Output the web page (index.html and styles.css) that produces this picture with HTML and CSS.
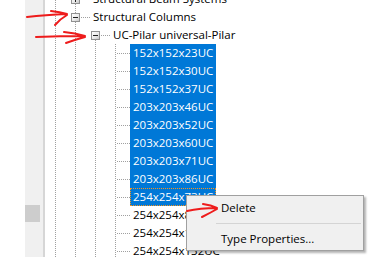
FILE: index.html
```html
<!DOCTYPE html>
<html lang="en">
<head>
  <meta charset="UTF-8" />
  <title>Project Browser</title>
  <link rel="stylesheet" href="styles.css">
</head>
<body>
  <div class="window">
    <div class="side"></div>
    <div class="scroll"><div class="thumb"></div></div>
    <div class="split"></div>

    <ul class="tree">
      <li class="row">
        <span class="guide"></span>
        <span class="node up down"><i class="box plus"></i></span>
        <span class="label">Structural Beam Systems</span>
      </li>
      <li class="row">
        <span class="guide"></span>
        <span class="node up down"><i class="box"></i></span>
        <span class="label">Structural Columns</span>
      </li>
      <li class="row">
        <span class="guide"></span>
        <span class="guide"></span>
        <span class="node down"><i class="box"></i></span>
        <span class="label">UC-Pilar universal-Pilar</span>
      </li>
      <li class="row"><span class="guide"></span><span class="guide"></span><span class="guide"></span><span class="leaf"></span><span class="label sel">152x152x23UC</span></li>
      <li class="row"><span class="guide"></span><span class="guide"></span><span class="guide"></span><span class="leaf"></span><span class="label sel">152x152x30UC</span></li>
      <li class="row"><span class="guide"></span><span class="guide"></span><span class="guide"></span><span class="leaf"></span><span class="label sel">152x152x37UC</span></li>
      <li class="row"><span class="guide"></span><span class="guide"></span><span class="guide"></span><span class="leaf"></span><span class="label sel">203x203x46UC</span></li>
      <li class="row"><span class="guide"></span><span class="guide"></span><span class="guide"></span><span class="leaf"></span><span class="label sel">203x203x52UC</span></li>
      <li class="row"><span class="guide"></span><span class="guide"></span><span class="guide"></span><span class="leaf"></span><span class="label sel">203x203x60UC</span></li>
      <li class="row"><span class="guide"></span><span class="guide"></span><span class="guide"></span><span class="leaf"></span><span class="label sel">203x203x71UC</span></li>
      <li class="row"><span class="guide"></span><span class="guide"></span><span class="guide"></span><span class="leaf"></span><span class="label sel">203x203x86UC</span></li>
      <li class="row"><span class="guide"></span><span class="guide"></span><span class="guide"></span><span class="leaf"></span><span class="label sel focus">254x254x73UC</span></li>
      <li class="row"><span class="guide"></span><span class="guide"></span><span class="guide"></span><span class="leaf"></span><span class="label">254x254x89UC</span></li>
      <li class="row"><span class="guide"></span><span class="guide"></span><span class="guide"></span><span class="leaf"></span><span class="label">254x254x107UC</span></li>
      <li class="row"><span class="guide"></span><span class="guide"></span><span class="guide"></span><span class="leaf"></span><span class="label">254x254x132UC</span></li>
    </ul>

    <div class="menu">
      <div class="item">Delete</div>
      <div class="sep"></div>
      <div class="item">Type Properties...</div>
    </div>

    <svg class="marks" width="370" height="257" viewBox="0 0 370 257">
      <path d="M27 17 Q45 15 67 14 M51 11 Q60 12 67 14 M67 15 Q60 19 55 25" />
      <path d="M36 37 Q60 36 85 36 M64 32 Q75 33 85 36 M85 37 Q74 40 66 43" />
      <path d="M187 211 Q200 208 217 208 M203 204 Q211 205 217 208 M217 209 Q210 213 202 217" />
    </svg>
  </div>
</body>
</html>
```

FILE: styles.css
```css
body {
  margin: 0;
  font-family: "Open Sans", "Noto Sans", sans-serif;
  font-size: 11.5px;
  color: #000;
  background: #fff;
}
.window {
  position: relative;
  display: flex;
  width: 370px;
  height: 257px;
  overflow: hidden;
}
.side {
  width: 25px;
  background: #fff;
}
.scroll {
  width: 18px;
  padding-top: 205px;
  background: #f0f0f0;
  box-sizing: border-box;
}
.thumb {
  width: 15px;
  height: 17px;
  background: #cdcdcd;
}
.split {
  width: 2px;
  background: #d6d6d6;
}
.tree {
  list-style: none;
  margin: -10px 0 0 0;
  padding: 0;
  flex: 1;
}
.row {
  display: flex;
  height: 18px;
  line-height: 18px;
  white-space: nowrap;
}
.guide {
  flex: none;
  width: 20px;
  height: 18px;
  background: repeating-linear-gradient(to bottom, #a0a0a0 0 1px, transparent 1px 2px) no-repeat 10px 0 / 1px 18px;
}
.leaf {
  flex: none;
  width: 25px;
  height: 18px;
  background:
    repeating-linear-gradient(to bottom, #a0a0a0 0 1px, transparent 1px 2px) no-repeat 10px 0 / 1px 18px,
    repeating-linear-gradient(to right, #a0a0a0 0 1px, transparent 1px 2px) no-repeat 12px 9px / 13px 1px;
}
.node {
  flex: none;
  width: 25px;
  height: 18px;
  padding: 5px 0 0 6px;
  box-sizing: border-box;
  background: repeating-linear-gradient(to right, #a0a0a0 0 1px, transparent 1px 2px) no-repeat 16px 9px / 9px 1px;
}
.node.up.down {
  background:
    repeating-linear-gradient(to bottom, #a0a0a0 0 1px, transparent 1px 2px) no-repeat 10px 0 / 1px 18px,
    repeating-linear-gradient(to right, #a0a0a0 0 1px, transparent 1px 2px) no-repeat 16px 9px / 9px 1px;
}
.node.down:not(.up) {
  background:
    repeating-linear-gradient(to bottom, #a0a0a0 0 1px, transparent 1px 2px) no-repeat 10px 14px / 1px 4px,
    repeating-linear-gradient(to right, #a0a0a0 0 1px, transparent 1px 2px) no-repeat 16px 9px / 9px 1px;
}
.box {
  position: relative;
  display: block;
  width: 9px;
  height: 9px;
  box-sizing: border-box;
  border: 1px solid #919191;
  background: linear-gradient(135deg, #ffffff 0%, #e8e8e8 60%, #c8c8c8 100%);
}
.box::before {
  content: "";
  position: absolute;
  left: 1px;
  top: 3px;
  width: 5px;
  height: 1px;
  background: #1e1e1e;
}
.box.plus::after {
  content: "";
  position: absolute;
  left: 3px;
  top: 1px;
  width: 1px;
  height: 5px;
  background: #1e1e1e;
}
.label {
  padding: 0 3px;
  height: 18px;
  box-sizing: border-box;
}
.label.sel {
  background: #0078d7;
  color: #fff;
}
.label.focus {
  border: 1px dotted #f7941d;
  line-height: 16px;
  padding: 0 2px;
}
.menu {
  position: absolute;
  left: 186px;
  top: 195px;
  width: 178px;
  height: 56px;
  box-sizing: border-box;
  padding: 1px 0;
  background: #f0f0f0;
  border: 1px solid #a0a0a0;
  box-shadow: 2px 2px 2px rgba(0, 0, 0, 0.3);
}
.item {
  height: 22px;
  line-height: 22px;
  padding-left: 34px;
  white-space: nowrap;
}
.sep {
  height: 1px;
  margin: 4px 2px 4px 29px;
  background: #d4d4d4;
}
.marks {
  position: absolute;
  left: 0;
  top: 0;
  pointer-events: none;
}
.marks path {
  fill: none;
  stroke: #ee1c1c;
  stroke-width: 2;
  stroke-linecap: round;
  stroke-linejoin: round;
}
```
